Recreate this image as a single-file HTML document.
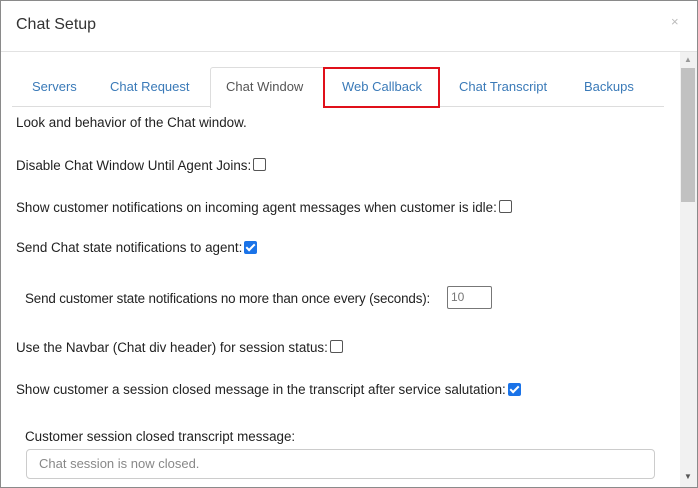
<!DOCTYPE html>
<html><head><style>
body{margin:0;width:698px;height:488px;overflow:hidden;font-family:"Liberation Sans",sans-serif;background:#fff;position:relative}
.box{position:absolute;left:0;top:0;width:696px;height:486px;border:1px solid #8a8a8a}
.t{position:absolute;font-size:13.4px;color:#222;white-space:nowrap}
.tab{position:absolute;top:79px;font-size:13px;color:#3a7ab8}
.cb{display:inline-block;width:11px;height:11px;border:1px solid #555;border-radius:2px;vertical-align:-1px;margin-left:2px;background:#fff}
.ck{display:inline-block;width:13px;height:13px;background:#1a73e8;border-radius:2px;vertical-align:-2px;margin-left:2px;position:relative}
.ck:after{content:"";position:absolute;left:4px;top:1px;width:3px;height:7px;border:solid #fff;border-width:0 2px 2px 0;transform:rotate(45deg)}
</style></head><body>
<div class="box"></div>
<div class="t" style="left:16px;top:16px;font-size:16px;color:#333">Chat Setup</div>
<div class="t" style="left:671px;top:14px;color:#bbb;font-size:13px">×</div>
<div style="position:absolute;left:1px;top:51px;width:696px;height:1px;background:#e2e2e2"></div>
<div style="position:absolute;left:680px;top:52px;width:17px;height:435px;background:#f1f1f1"></div>
<div style="position:absolute;left:681px;top:68px;width:14px;height:134px;background:#c1c1c1"></div>
<div class="t" style="left:684px;top:55px;font-size:8px;color:#999">▲</div>
<div class="t" style="left:684px;top:472px;font-size:8px;color:#555">▼</div>
<div style="position:absolute;left:12px;top:106px;width:652px;height:1px;background:#ddd"></div>
<div style="position:absolute;left:210px;top:67px;width:113px;height:40px;border:1px solid #ddd;border-bottom:none;background:#fff;border-radius:3px 3px 0 0"></div>
<div class="tab" style="left:32px">Servers</div>
<div class="tab" style="left:110px">Chat Request</div>
<div class="tab" style="left:226px;color:#555">Chat Window</div>
<div class="tab" style="left:342px">Web Callback</div>
<div style="position:absolute;left:323px;top:67px;width:113px;height:37px;border:2px solid #e0101a"></div>
<div class="tab" style="left:459px">Chat Transcript</div>
<div class="tab" style="left:584px">Backups</div>
<div class="t" style="left:16px;top:115px">Look and behavior of the Chat window.</div>
<div class="t" style="left:16px;top:158px">Disable Chat Window Until Agent Joins:<span class="cb"></span></div>
<div class="t" style="left:16px;top:200px">Show customer notifications on incoming agent messages when customer is idle:<span class="cb"></span></div>
<div class="t" style="left:16px;top:240px">Send Chat state notifications to agent:<span class="ck"></span></div>
<div class="t" style="left:25px;top:291px;letter-spacing:-0.15px">Send customer state notifications no more than once every (seconds):</div>
<div style="position:absolute;left:447px;top:286px;border:1px solid #777;border-radius:2px;font-size:12px;color:#777;line-height:21px;padding-left:3px;box-sizing:border-box;width:45px;height:23px">10</div>
<div class="t" style="left:16px;top:340px">Use the Navbar (Chat div header) for session status:<span class="cb"></span></div>
<div class="t" style="left:16px;top:382px">Show customer a session closed message in the transcript after service salutation:<span class="ck"></span></div>
<div class="t" style="left:25px;top:429px">Customer session closed transcript message:</div>
<div style="position:absolute;left:26px;top:449px;width:629px;height:30px;border:1px solid #ccc;border-radius:4px;box-sizing:border-box;font-size:13px;color:#888;line-height:28px;padding-left:12px">Chat session is now closed.</div>
</body></html>
